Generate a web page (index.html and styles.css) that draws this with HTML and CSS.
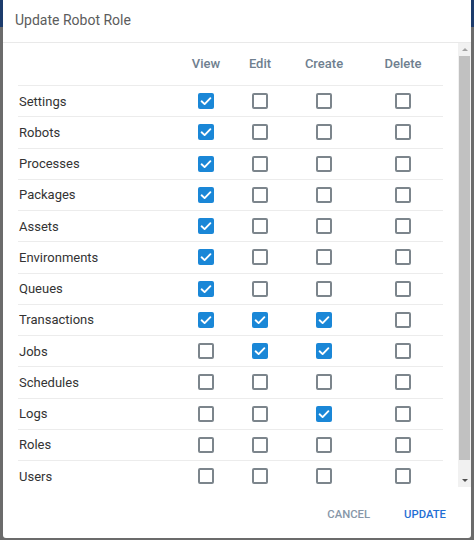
FILE: index.html
```html
<!DOCTYPE html>
<html>
<head>
<meta charset="utf-8">
<link rel="stylesheet" href="styles.css">
</head>
<body>
<div class="dialog">
  <div class="title">Update Robot Role</div>
  <div class="body">
    <div class="scroll">
      <div class="table">
        <div class="row head">
          <div class="label"></div>
          <div class="cell">View</div>
          <div class="cell">Edit</div>
          <div class="cell">Create</div>
          <div class="cell last">Delete</div>
        </div>
        <div id="rows"></div>
      </div>
    </div>
    <div class="scrollbar">
      <div class="arrow up"></div>
      <div class="track"><div class="thumb"></div></div>
      <div class="arrow down"></div>
    </div>
  </div>
  <div class="footer">
    <span class="btn cancel">CANCEL</span>
    <span class="btn update">UPDATE</span>
  </div>
</div>
<script>
var data = [
  ["Settings",1,0,0,0],["Robots",1,0,0,0],["Processes",1,0,0,0],["Packages",1,0,0,0],
  ["Assets",1,0,0,0],["Environments",1,0,0,0],["Queues",1,0,0,0],["Transactions",1,1,1,0],
  ["Jobs",0,1,1,0],["Schedules",0,0,0,0],["Logs",0,0,1,0],["Roles",0,0,0,0],["Users",0,0,0,0]
];
var check = '<svg viewBox="0 0 16 16" width="16" height="16"><path d="M3.6 8.3 L6.6 11.1 L12.4 5.2" fill="none" stroke="#fff" stroke-width="1.9" stroke-linecap="round" stroke-linejoin="round"/></svg>';
var html = '';
data.forEach(function(r){
  html += '<div class="row"><div class="label">' + r[0] + '</div>';
  for (var i = 1; i < 5; i++) {
    html += '<div class="cell' + (i == 4 ? ' last' : '') + '"><span class="cb' + (r[i] ? ' on' : '') + '">' + (r[i] ? check : '') + '</span></div>';
  }
  html += '</div>';
});
document.getElementById('rows').innerHTML = html;
</script>
</body>
</html>
```
FILE: styles.css
```css
html, body {
  margin: 0;
  padding: 0;
  height: 540px;
  overflow: hidden;
}
body {
  background: linear-gradient(#1d3c6c 0 27px, #6b6b6b 27px);
  font-family: Roboto, "Liberation Sans", sans-serif;
}
.dialog {
  margin: 0 3px;
  height: 538px;
  background: #fff;
  border-radius: 0 0 3px 3px;
  display: flex;
  flex-direction: column;
}
.title {
  height: 43px;
  box-sizing: border-box;
  padding: 12px 0 0 12px;
  font-size: 14px;
  color: #5c5c5c;
  border-bottom: 1px solid #e9e9e9;
}
.body {
  height: 444px;
  display: flex;
  overflow: hidden;
}
.scroll {
  flex: 1;
  overflow: hidden;
  padding-left: 15px;
}
.table {
  width: 425px;
}
.row {
  display: grid;
  grid-template-columns: 162px 52px 56px 72px 83px;
  height: 31.25px;
  box-sizing: border-box;
  border-top: 1px solid #ececec;
  align-items: center;
}
.row.head {
  height: 42px;
  border-top: none;
  font-size: 13px;
  font-weight: 500;
  color: #6f7f8f;
  padding-bottom: 2px;
}
.label {
  font-size: 13px;
  color: #333;
  padding-left: 1px;
}
.cell {
  display: flex;
  justify-content: center;
}
.cell.last {
  padding-left: 3px;
}
.cb {
  width: 16px;
  height: 16px;
  box-sizing: border-box;
  border: 2px solid #7c858c;
  border-radius: 2px;
  display: block;
}
.cb.on {
  border: none;
  background: #1a87d7;
}
.cb svg {
  display: block;
}
.scrollbar {
  width: 13px;
  background: #f1f1f1;
  display: flex;
  flex-direction: column;
}
.arrow {
  height: 13px;
  display: flex;
  align-items: center;
  justify-content: center;
}
.arrow::before {
  content: "";
  width: 0;
  height: 0;
  border-left: 3px solid transparent;
  border-right: 3px solid transparent;
}
.arrow.up::before {
  border-bottom: 3px solid #a3a3a3;
}
.arrow.down::before {
  border-top: 3px solid #505050;
}
.track {
  flex: 1;
  padding: 0 1px;
}
.thumb {
  height: 404px;
  background: #c1c1c1;
}
.footer {
  flex: 1;
  display: flex;
  justify-content: flex-end;
  align-items: center;
  gap: 34px;
  padding: 3px 25px 0 0;
}
.btn {
  font-size: 11.3px;
  font-weight: 500;
}
.cancel {
  color: #8797a8;
}
.update {
  color: #1f6fd4;
}
```
